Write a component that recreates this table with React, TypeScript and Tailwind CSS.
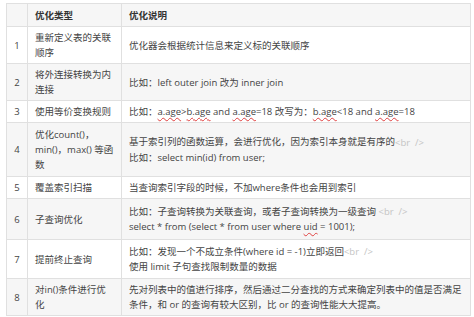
import React from "react";

const W = ({ children }: { children: React.ReactNode }) => (
  <span className="underline decoration-wavy decoration-[#e04040] decoration-1 underline-offset-2">{children}</span>
);
const BR = () => (
  <span className="inline-block align-middle leading-[15px] text-[#c4c4c4] whitespace-pre">{"<br  />"}</span>
);

type Row = { n: string; t: React.ReactNode; d: React.ReactNode; h: string };

const rows: Row[] = [
  { n: "1", h: "h-[37px]", t: "重新定义表的关联顺序", d: "优化器会根据统计信息来定义标的关联顺序" },
  { n: "2", h: "h-[37px]", t: "将外连接转换为内连接", d: "比如：left outer join 改为 inner join" },
  {
    n: "3",
    h: "h-[22px]",
    t: "使用等价变换规则",
    d: (
      <>
        比如：<W>a.age</W>&gt;<W>b.age</W> and <W>a.age</W>=18 改写为：<W>b.age</W>&lt;18 and <W>a.age</W>=18
      </>
    ),
  },
  {
    n: "4",
    h: "h-[54px]",
    t: "优化count()，min()，max() 等函数",
    d: (
      <>
        基于索引列的函数运算，会进行优化，因为索引本身就是有序的<BR />
        <br />
        比如：select min(id) from user;
      </>
    ),
  },
  { n: "5", h: "h-[21px]", t: "覆盖索引扫描", d: "当查询索引字段的时候，不加where条件也会用到索引" },
  {
    n: "6",
    h: "h-[41px]",
    t: "子查询优化",
    d: (
      <>
        比如：子查询转换为关联查询，或者子查询转换为一级查询 <BR />
        <br />
        select * from (select * from user where <W>uid</W> = 1001);
      </>
    ),
  },
  {
    n: "7",
    h: "h-[39px]",
    t: "提前终止查询",
    d: (
      <>
        比如：发现一个不成立条件(where id = -1)立即返回<BR />
        <br />
        使用 limit 子句查找限制数量的数据
      </>
    ),
  },
  {
    n: "8",
    h: "h-[36px]",
    t: "对in()条件进行优化",
    d: "先对列表中的值进行排序，然后通过二分查找的方式来确定列表中的值是否满足条件，和 or 的查询有较大区别，比 or 的查询性能大大提高。",
  },
];

export default function App() {
  return (
    <div
      className="w-[474px] h-[317px] bg-white overflow-hidden pt-[3px] pl-[6px]"
      style={{ fontFamily: '"Open Sans", "Noto Sans CJK SC", sans-serif' }}
    >
      <table className="w-[465px] border-collapse table-fixed text-[9.5px] leading-[15px] text-[#444]">
        <colgroup>
          <col className="w-[21px]" />
          <col className="w-[94px]" />
          <col />
        </colgroup>
        <thead>
          <tr className="bg-[#f6f6f6] h-[23px]">
            <th className="border border-[#e0e0e0]"></th>
            <th className="border border-[#e0e0e0] px-[7px] text-left font-bold text-[#333]">优化类型</th>
            <th className="border border-[#e0e0e0] px-[7px] text-left font-bold text-[#333]">优化说明</th>
          </tr>
        </thead>
        <tbody>
          {rows.map((r, i) => (
            <tr key={r.n} className={`${r.h} ${i % 2 === 1 ? "bg-[#f6f6f6]" : "bg-white"}`}>
              <td className="border border-[#e0e0e0] text-center align-middle py-[3px]">{r.n}</td>
              <td className="border border-[#e0e0e0] px-[7px] py-[3px] align-middle">{r.t}</td>
              <td className="border border-[#e0e0e0] px-[7px] py-[3px] align-middle">{r.d}</td>
            </tr>
          ))}
        </tbody>
      </table>
    </div>
  );
}
